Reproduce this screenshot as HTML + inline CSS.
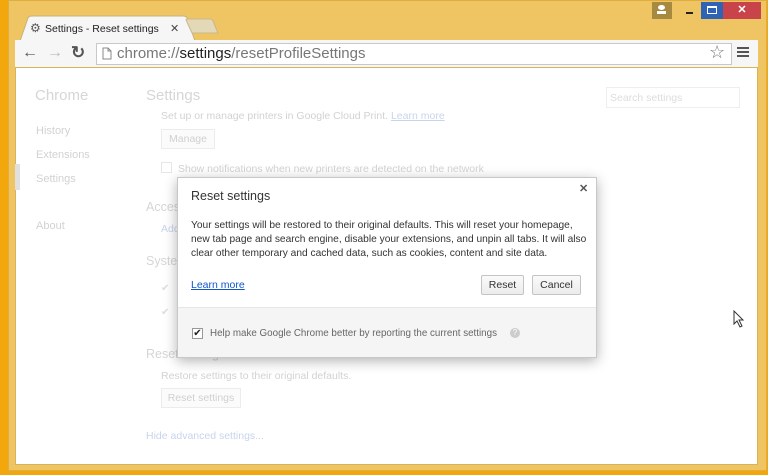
<!DOCTYPE html>
<html><head><meta charset="utf-8"><style>
*{margin:0;padding:0;box-sizing:border-box}
body{width:768px;height:475px;overflow:hidden;background:#f2a70c;font-family:"Liberation Sans",sans-serif;position:relative}
.abs{position:absolute}
#frame{left:8px;top:0;width:759px;height:471px;background:#efc463;border:1px solid #e0ad3e}
#content{left:15px;top:67px;width:743px;height:398px;background:#fff;border:1px solid #d9b35a}
.g{color:#d6d6d6}
.t{font-size:11px;color:#d2d2d2}
.btn{border:1px solid #ececec;background:#fbfbfb;font-size:10.5px;color:#d0d0d0;text-align:center}
</style></head><body>
<div class="abs" id="frame"></div>
<svg class="abs" style="left:20px;top:15px" width="200" height="26"><path d="M0 26 L8 3 Q9 1 12 1 L163 1 Q166 1 167 3 L175 26 Z" fill="#f6f6f6" stroke="#c8b27a"/><path d="M166 5 Q166 4 168 4 L190 4 Q192 4 193 6 L198 18 L172 18 Z" fill="#e3d8b8" stroke="#c9b88a"/></svg>
<div class="abs" style="left:30px;top:21px;font-size:12px;color:#555">&#9881;</div>
<div class="abs" style="left:45px;top:23px;font-size:10.5px;color:#222">Settings - Reset settings</div>
<div class="abs" style="left:170px;top:22px;font-size:11px;color:#444">✕</div>
<div class="abs" style="left:15px;top:40px;width:743px;height:28px;background:#f6f6f6;border-bottom:1px solid #d8d8d8"></div>
<div class="abs" style="left:22px;top:44px;font-size:16px;color:#555;font-weight:bold">&#8592;</div>
<div class="abs" style="left:47px;top:44px;font-size:16px;color:#bbb;font-weight:bold">&#8594;</div>
<div class="abs" style="left:71px;top:43px;font-size:17px;color:#555;font-weight:bold">&#8635;</div>
<div class="abs" style="left:96px;top:43px;width:636px;height:22px;background:#fff;border:1px solid #c8c8c8"></div>
<svg class="abs" style="left:102px;top:47px" width="10" height="13"><path d="M1 1H6L9 4V12H1Z M6 1V4H9" fill="none" stroke="#888"/></svg>
<div class="abs" style="left:117px;top:45px;font-size:15px;color:#777">chrome://<span style="color:#222">settings</span>/resetProfileSettings</div>
<div class="abs" style="left:709px;top:42px;font-size:18px;color:#777">&#9734;</div>
<div class="abs" style="left:737px;top:47px;width:12px;height:2px;background:#555;box-shadow:0 4px 0 #555,0 8px 0 #555"></div>
<div class="abs" style="left:652px;top:2px;width:20px;height:17px;background:#a88940"></div>
<div class="abs" style="left:658px;top:5px;width:7px;height:5px;border-radius:50%;background:#fff"></div>
<div class="abs" style="left:657px;top:11px;width:9px;height:3px;background:#fff"></div>
<div class="abs" style="left:686px;top:12px;width:7px;height:2px;background:#222"></div>
<div class="abs" style="left:701px;top:2px;width:22px;height:17px;background:#2f63b6"></div>
<div class="abs" style="left:707px;top:6px;width:10px;height:8px;border:1px solid #fff;border-top-width:2px"></div>
<div class="abs" style="left:723px;top:2px;width:38px;height:17px;background:#c8434a;color:#fff;font-size:11px;text-align:center;line-height:17px;font-weight:bold">✕</div>
<div class="abs" id="content"></div>
<div class="abs" style="left:15px;top:164px;width:5px;height:26px;background:#e0e0e0"></div>
<div class="abs g" style="left:35px;top:87px;font-size:15px">Chrome</div>
<div class="abs g" style="left:146px;top:87px;font-size:15px">Settings</div>
<div class="abs t" style="left:36px;top:125px">History</div>
<div class="abs t" style="left:36px;top:149px">Extensions</div>
<div class="abs t" style="left:36px;top:173px">Settings</div>
<div class="abs t" style="left:36px;top:220px">About</div>
<div class="abs" style="left:606px;top:87px;width:134px;height:21px;border:1px solid #eee;font-size:10.5px;color:#ddd;padding:4px 3px">Search settings</div>
<div class="abs t" style="left:161px;top:110px;font-size:10.5px">Set up or manage printers in Google Cloud Print. <span style="color:#c8d4ec;text-decoration:underline">Learn more</span></div>
<div class="abs btn" style="left:161px;top:129px;width:54px;height:20px;line-height:18px">Manage</div>
<div class="abs" style="left:161px;top:162px;width:11px;height:11px;border:1px solid #e6e6e6"></div>
<div class="abs t" style="left:178px;top:163px;font-size:10.5px">Show notifications when new printers are detected on the network</div>
<div class="abs g" style="left:146px;top:200px;font-size:12.5px">Accessibility</div>
<div class="abs" style="left:161px;top:223px;font-size:10.5px;color:#c8d4ec">Add</div>
<div class="abs g" style="left:146px;top:254px;font-size:12.5px">System</div>
<div class="abs" style="left:161px;top:283px;font-size:10px;color:#ddd">✔</div>
<div class="abs" style="left:161px;top:307px;font-size:10px;color:#ddd">✔</div>
<div class="abs g" style="left:146px;top:347px;font-size:12.5px">Reset settings</div>
<div class="abs t" style="left:161px;top:370px;font-size:10.5px">Restore settings to their original defaults.</div>
<div class="abs btn" style="left:161px;top:388px;width:80px;height:20px;line-height:18px">Reset settings</div>
<div class="abs" style="left:146px;top:430px;font-size:10.5px;color:#c8d4ec">Hide advanced settings...</div>
<div class="abs" style="left:177px;top:177px;width:420px;height:181px;background:#fff;border:1px solid #c8c8c8;box-shadow:0 3px 12px rgba(0,0,0,.3)"></div>
<div class="abs" style="left:178px;top:307px;width:418px;height:50px;background:#f5f5f5;border-top:1px solid #e6e6e6"></div>
<div class="abs" style="left:191px;top:189px;font-size:12.5px;color:#333">Reset settings</div>
<div class="abs" style="left:579px;top:182px;font-size:11px;color:#555;font-weight:bold">✕</div>
<div class="abs" style="left:191px;top:219px;width:400px;font-size:10.2px;line-height:14px;color:#333">Your settings will be restored to their original defaults. This will reset your homepage, new tab page and search engine, disable your extensions, and unpin all tabs. It will also clear other temporary and cached data, such as cookies, content and site data.</div>
<div class="abs" style="left:191px;top:279px;font-size:10.5px;color:#1155cc;text-decoration:underline">Learn more</div>
<div class="abs" style="left:481px;top:275px;width:43px;height:20px;border:1px solid #c4c4c4;border-radius:2px;background:linear-gradient(#fafafa,#ececec);font-size:10.5px;color:#333;text-align:center;line-height:18px">Reset</div>
<div class="abs" style="left:532px;top:275px;width:49px;height:20px;border:1px solid #c4c4c4;border-radius:2px;background:linear-gradient(#fafafa,#ececec);font-size:10.5px;color:#333;text-align:center;line-height:18px">Cancel</div>
<div class="abs" style="left:192px;top:328px;width:11px;height:11px;border:1px solid #999;background:#fff;font-size:10px;line-height:9px;color:#222;text-align:center">✔</div>
<div class="abs" style="left:210px;top:328px;font-size:9.8px;color:#666">Help make Google Chrome better by reporting the current settings</div>
<div class="abs" style="left:510px;top:328px;width:10px;height:10px;border-radius:50%;background:#ccc;color:#fff;font-size:8px;text-align:center;line-height:10px">?</div>
<svg class="abs" style="left:733px;top:310px" width="12" height="18"><path d="M1 1V14L4 11L7 17L9 16L6 10H10Z" fill="#fff" stroke="#333"/></svg>
</body></html>
